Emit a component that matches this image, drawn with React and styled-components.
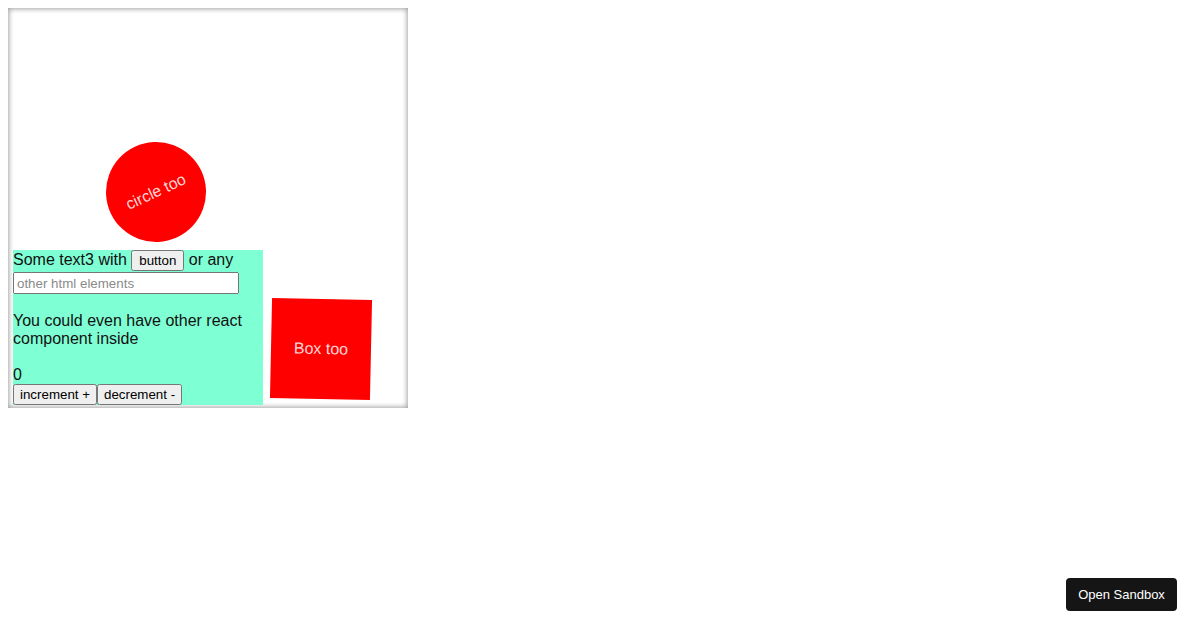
import React, { useState } from 'react';
import styled, { createGlobalStyle } from 'styled-components';

const GlobalStyle = createGlobalStyle`
  body {
    margin: 8px;
    font-family: "Liberation Sans", Arial, sans-serif;
    background: #ffffff;
    color: #000000;
  }
`;

const World = styled.div`
  position: relative;
  width: 400px;
  height: 400px;
  overflow: hidden;
  box-shadow: inset 0 0 5px 1px #a0a0a0;
`;

// bodies sit on a free canvas, their place is the content
const Body = styled.div`
  position: absolute;
  left: ${(p) => p.x}px;
  top: ${(p) => p.y}px;
  transform: rotate(${(p) => p.angle || 0}deg);
`;

const Circle = styled.div`
  width: 100px;
  height: 100px;
  border-radius: 50%;
  background: #ff0000;
  display: flex;
  align-items: center;
  justify-content: center;
  color: rgba(255, 255, 255, 0.85);
  font-size: 16px;
`;

const Box = styled.div`
  width: 100px;
  height: 100px;
  background: #ff0000;
  display: flex;
  align-items: center;
  justify-content: center;
  color: rgba(255, 255, 255, 0.85);
  font-size: 16px;
`;

const Panel = styled.div`
  width: 250px;
  background: aquamarine;
  font-size: 16px;
  line-height: normal;
  color: #111;
`;

const NativeButton = styled.button`
  font-family: "Liberation Sans", Arial, sans-serif;
  font-size: 13.33px;
  margin: 0;
  padding: 1px ${(p) => (p.tight ? 5 : 6)}px;
`;

const TextInput = styled.input`
  display: block;
  font-family: "Liberation Sans", Arial, sans-serif;
  font-size: 13.33px;
  width: 226px;
  height: 22px;
  box-sizing: border-box;
  margin: 1px 0 0 0;
  &::placeholder {
    color: #8a8a8a;
  }
`;

const Para = styled.p`
  margin: 18px 0;
`;

const Counter = () => {
  const [count, setCount] = useState(0);
  return (
    <div>
      <div>{count}</div>
      <NativeButton tight onClick={() => setCount(count + 1)}>increment +</NativeButton>
      <NativeButton tight onClick={() => setCount(count - 1)}>decrement -</NativeButton>
    </div>
  );
};

const SandboxLink = styled.a`
  position: fixed;
  right: 23px;
  bottom: 19px;
  width: 111px;
  height: 33px;
  box-sizing: border-box;
  display: flex;
  align-items: center;
  justify-content: center;
  background: #151515;
  color: #ffffff;
  font-family: "Liberation Sans", Arial, sans-serif;
  font-size: 13px;
  border-radius: 4px;
  text-decoration: none;
`;

export default function App() {
  return (
    <>
      <GlobalStyle />
      <World>
        <Body x={5} y={242}>
          <Panel>
            Some text3 with <NativeButton>button</NativeButton> or any
            <TextInput placeholder="other html elements" />
            <Para>You could even have other react component inside</Para>
            <Counter />
          </Panel>
        </Body>
        <Body x={98} y={134} angle={-25}>
          <Circle>circle too</Circle>
        </Body>
        <Body x={263} y={291} angle={1.2}>
          <Box>Box too</Box>
        </Body>
      </World>
      <SandboxLink href="#">Open Sandbox</SandboxLink>
    </>
  );
}
